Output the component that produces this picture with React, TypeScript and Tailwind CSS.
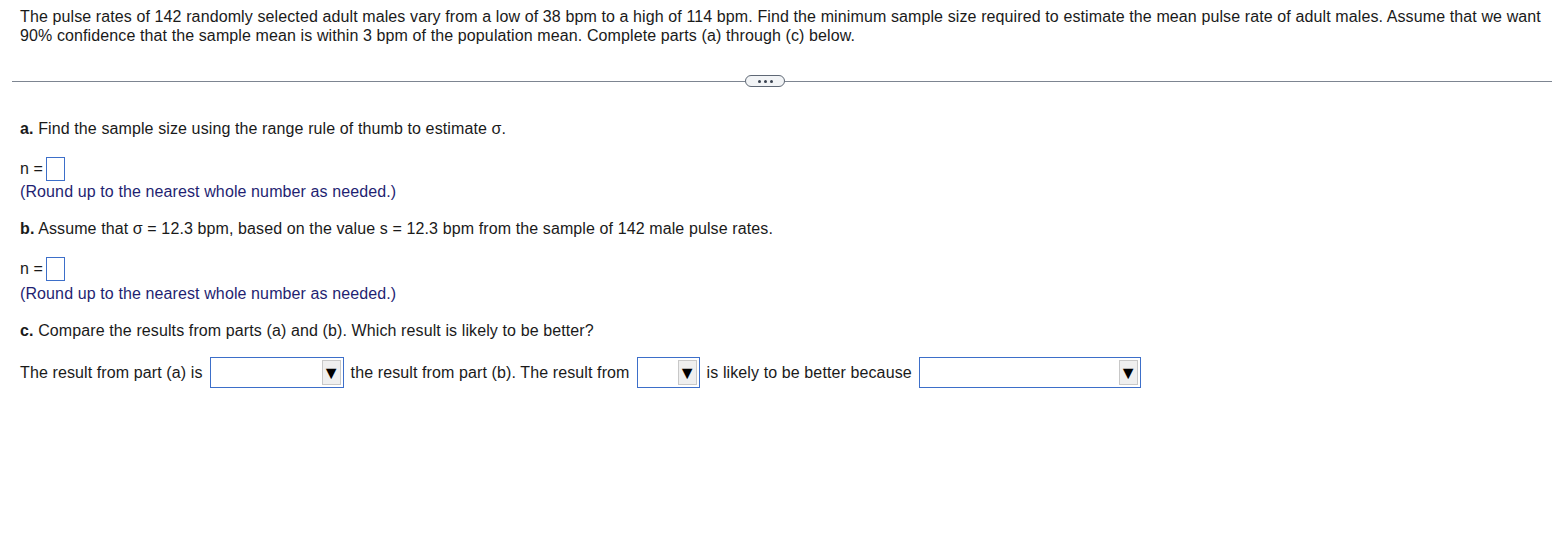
import React from "react";

function AnswerBox() {
  return <span className="inline-block h-[24px] w-[19px] border border-[#3d6fc9] bg-white align-middle" />;
}

function Dropdown({ width }: { width: string }) {
  return (
    <span className={`inline-flex h-[31px] items-center justify-end border border-[#3d6fc9] bg-white p-[2px] align-middle ${width}`}>
      <span className="flex h-full w-[19px] items-center justify-center border border-[#c8c8c8] bg-[#efefef] text-[18px] leading-none tracking-normal text-black">
        ▼
      </span>
    </span>
  );
}

export default function App() {
  return (
    <div className="min-h-[552px] bg-white font-['Liberation_Sans',Arial,sans-serif] text-[16px] tracking-[0.11px] text-[#1a1a1a]">
      <div className="px-5 pt-[7px] leading-[19px]">
        The pulse rates of 142 randomly selected adult males vary from a low of 38 bpm to a high of 114 bpm. Find the
        minimum sample size required to estimate the mean pulse rate of adult males. Assume that we want 90% confidence
        that the sample mean is within 3 bpm of the population mean. Complete parts (a) through (c) below.
      </div>

      <div className="mt-[30px] flex items-center pl-3 pr-[15px]">
        <div className="h-px w-[733px] bg-[#7d8591]" />
        <div className="flex h-[12px] w-[40px] items-center justify-center gap-[3px] rounded-full border-[1.5px] border-[#5f6875] bg-[#f2f4f6]">
          <span className="h-[3px] w-[3px] rounded-full bg-[#3a4250]" />
          <span className="h-[3px] w-[3px] rounded-full bg-[#3a4250]" />
          <span className="h-[3px] w-[3px] rounded-full bg-[#3a4250]" />
        </div>
        <div className="h-px flex-1 bg-[#7d8591]" />
      </div>

      <div className="px-5">
        <div className="mt-[32px] leading-[19px]">
          <b>a.</b> Find the sample size using the range rule of thumb to estimate σ.
        </div>
        <div className="mt-[19px] flex items-center gap-[3px] leading-[24px]">
          <span>n =</span>
          <AnswerBox />
        </div>
        <div className="mt-[1px] leading-[19px] text-[#1f1f72]">(Round up to the nearest whole number as needed.)</div>

        <div className="mt-[18px] leading-[19px]">
          <b>b.</b> Assume that σ = 12.3 bpm, based on the value s = 12.3 bpm from the sample of 142 male pulse rates.
        </div>
        <div className="mt-[19px] flex items-center gap-[3px] leading-[24px]">
          <span>n =</span>
          <AnswerBox />
        </div>
        <div className="mt-[3px] leading-[19px] text-[#1f1f72]">(Round up to the nearest whole number as needed.)</div>

        <div className="mt-[18px] leading-[19px]">
          <b>c.</b> Compare the results from parts (a) and (b). Which result is likely to be better?
        </div>
        <div className="mt-[17px] flex items-center gap-[7px]">
          <span>The result from part (a) is</span>
          <Dropdown width="w-[134px]" />
          <span>the result from part (b). The result from</span>
          <Dropdown width="w-[63px]" />
          <span>is likely to be better because</span>
          <Dropdown width="w-[222px]" />
        </div>
      </div>
    </div>
  );
}
